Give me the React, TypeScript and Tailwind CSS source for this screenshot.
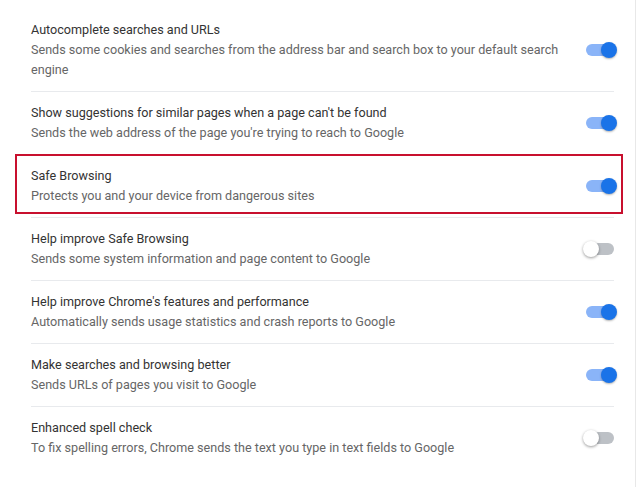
import React from 'react';

interface Setting {
  title: string;
  description: string;
  enabled: boolean;
  highlighted?: boolean;
}

const settings: Setting[] = [
  {
    title: 'Autocomplete searches and URLs',
    description:
      'Sends some cookies and searches from the address bar and search box to your default search engine',
    enabled: true,
  },
  {
    title: "Show suggestions for similar pages when a page can't be found",
    description: "Sends the web address of the page you're trying to reach to Google",
    enabled: true,
  },
  {
    title: 'Safe Browsing',
    description: 'Protects you and your device from dangerous sites',
    enabled: true,
    highlighted: true,
  },
  {
    title: 'Help improve Safe Browsing',
    description: 'Sends some system information and page content to Google',
    enabled: false,
  },
  {
    title: "Help improve Chrome's features and performance",
    description: 'Automatically sends usage statistics and crash reports to Google',
    enabled: true,
  },
  {
    title: 'Make searches and browsing better',
    description: 'Sends URLs of pages you visit to Google',
    enabled: true,
  },
  {
    title: 'Enhanced spell check',
    description: 'To fix spelling errors, Chrome sends the text you type in text fields to Google',
    enabled: false,
  },
];

function Toggle({ on }: { on: boolean }) {
  return (
    <div className="relative -mr-[3px] flex h-4 w-[34px] shrink-0 items-center">
      <div
        className={
          on
            ? 'mx-[3px] h-3 w-full rounded-full bg-[#8ab4f8]'
            : 'mx-[3px] h-3 w-full rounded-full bg-[#bdc1c6]'
        }
      />
      <div
        className={
          on
            ? 'absolute right-0 top-0 h-4 w-4 rounded-full bg-[#1a73e8] shadow-[0_1px_2px_rgba(0,0,0,0.3)]'
            : 'absolute left-0 top-0 h-4 w-4 rounded-full bg-white shadow-[0_1px_3px_rgba(0,0,0,0.4)]'
        }
      />
    </div>
  );
}

export default function App() {
  return (
    <div className="h-[487px] w-[640px] overflow-hidden bg-white font-['Roboto',sans-serif]">
      <div className="h-full w-[636px] border-r border-[#e8e8e8] pl-[31px] pr-[21px] pt-[9px]">
        {settings.map((s, i) => (
          <div
            key={s.title}
            className={
              i === 0
                ? 'relative flex min-h-[63px] items-center gap-3 py-[11px]'
                : 'relative flex min-h-[63px] items-center gap-3 border-t border-[#e8eaed] py-[11px]'
            }
          >
            <div className="flex-1 text-[12.6px] leading-5">
              <div className="text-[#333333]">{s.title}</div>
              <div className="text-[#666666]">{s.description}</div>
            </div>
            <Toggle on={s.enabled} />
            {s.highlighted && (
              <div className="pointer-events-none absolute -left-4 -right-[9px] -top-px bottom-[3px] border-2 border-[#c8102e]" />
            )}
          </div>
        ))}
      </div>
    </div>
  );
}
